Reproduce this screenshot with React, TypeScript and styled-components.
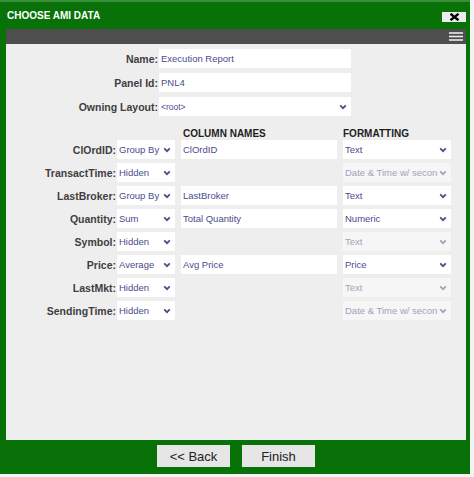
import { FC } from 'react';
import styled, { createGlobalStyle } from 'styled-components';

const COLOR_GREEN = '#087208';
const COLOR_BAR = '#4e4e4e';
const COLOR_PANEL = '#eeeeee';
const COLOR_LABEL = '#3e3e3e';
const COLOR_VALUE = '#4b4b8c';
const COLOR_DISABLED = '#a2a2bc';

const GlobalStyle = createGlobalStyle`
  html, body {
    margin: 0;
    padding: 0;
    background: #f2f4f2;
    font-family: "Liberation Sans", Arial, sans-serif;
  }
`;

const StyledWindow = styled.div`
  width: 470px;
  height: 474px;
  box-sizing: border-box;
  background: ${COLOR_GREEN};
  border-top: 2px solid #3a8f3a;
  padding: 0 4px 0 6px;
  display: flex;
  flex-direction: column;
`;

const StyledTitleBar = styled.div`
  height: 27px;
  display: flex;
  align-items: center;
  justify-content: space-between;
  padding-left: 1px;
`;

const StyledTitle = styled.span`
  color: #ffffff;
  font-size: 10px;
  font-weight: bold;
`;

const StyledCloseButton = styled.div`
  width: 24px;
  height: 10px;
  margin-top: 3px;
  background: #ececec;
  display: flex;
  align-items: center;
  justify-content: center;
`;

const StyledToolbar = styled.div`
  height: 15px;
  background: ${COLOR_BAR};
  display: flex;
  align-items: center;
  justify-content: flex-end;
  padding-right: 3px;
`;

const StyledPanel = styled.div`
  height: 396px;
  background: ${COLOR_PANEL};
  box-sizing: border-box;
  padding-top: 5px;
  display: flex;
  flex-direction: column;
`;

const StyledTopForm = styled.div`
  display: flex;
  flex-direction: column;
  gap: 5px;
`;

const StyledTopRow = styled.div`
  display: flex;
  align-items: center;
`;

const StyledTopLabel = styled.span`
  width: 152px;
  text-align: right;
  padding-right: 1px;
  color: ${COLOR_LABEL};
  font-size: 10.5px;
  font-weight: bold;
`;

const StyledInput = styled.div<{ width: number }>`
  width: ${({ width }) => width}px;
  height: 19px;
  box-sizing: border-box;
  background: #ffffff;
  padding-left: 2px;
  display: flex;
  align-items: center;
  color: ${COLOR_VALUE};
  font-size: 9.5px;
  white-space: nowrap;
  overflow: hidden;
`;

const StyledSelect = styled.div<{ width: number; disabled?: boolean }>`
  width: ${({ width }) => width}px;
  height: 19px;
  box-sizing: border-box;
  background: ${({ disabled }) => (disabled ? '#f6f6f6' : '#ffffff')};
  padding: 0 4px 0 2px;
  display: flex;
  align-items: center;
  gap: 1px;
  color: ${({ disabled }) => (disabled ? COLOR_DISABLED : COLOR_VALUE)};
`;

const StyledSelectText = styled.span<{ small?: boolean }>`
  flex: 1;
  min-width: 0;
  overflow: hidden;
  white-space: nowrap;
  font-size: ${({ small }) => (small ? '8.5px' : '9.5px')};
`;

const StyledFields = styled.div`
  margin-top: 11px;
  display: flex;
  flex-direction: column;
  gap: 4px;
`;

const StyledHeaderRow = styled.div`
  display: flex;
  height: 12px;
  align-items: center;
  margin-bottom: -3px;
`;

const StyledHeader = styled.span<{ left: number; width: number }>`
  margin-left: ${({ left }) => left}px;
  width: ${({ width }) => width}px;
  color: #1e1e1e;
  font-size: 10px;
  font-weight: bold;
`;

const StyledFieldRow = styled.div`
  display: flex;
  align-items: center;
`;

const StyledFieldLabel = styled.span`
  width: 110px;
  margin-right: 1px;
  text-align: right;
  color: ${COLOR_LABEL};
  font-size: 10.5px;
  font-weight: bold;
`;

const StyledCell = styled.div<{ width: number }>`
  margin-left: 6px;
  width: ${({ width }) => width}px;
  height: 19px;
`;

const StyledFooter = styled.div`
  flex: 1;
  display: flex;
  justify-content: center;
  align-items: flex-start;
  padding-top: 5px;
  gap: 12px;
`;

const StyledButton = styled.button`
  width: 73px;
  height: 22px;
  border: none;
  background: #e6e6e6;
  color: #222222;
  font-family: "Liberation Sans", Arial, sans-serif;
  font-size: 13px;
  padding: 0;
`;

const Chevron: FC<{ color: string }> = ({ color }) => (
  <svg width='8' height='6' viewBox='0 0 8 6'>
    <path d='M1.2 1.3 L4 4.2 L6.8 1.3' fill='none' stroke={color} strokeWidth='1.7' />
  </svg>
);

const Select: FC<{ value: string; width: number; disabled?: boolean; small?: boolean }> = ({
  value,
  width,
  disabled,
  small,
}) => (
  <StyledSelect width={width} disabled={disabled}>
    <StyledSelectText small={small}>{value}</StyledSelectText>
    <Chevron color={disabled ? COLOR_DISABLED : COLOR_VALUE} />
  </StyledSelect>
);

type Field = {
  label: string;
  agg: string;
  name?: string;
  format: string;
  formatOn: boolean;
};

const FIELDS: Field[] = [
  { label: 'ClOrdID', agg: 'Group By', name: 'ClOrdID', format: 'Text', formatOn: true },
  { label: 'TransactTime', agg: 'Hidden', format: 'Date & Time w/ seconds', formatOn: false },
  { label: 'LastBroker', agg: 'Group By', name: 'LastBroker', format: 'Text', formatOn: true },
  { label: 'Quantity', agg: 'Sum', name: 'Total Quantity', format: 'Numeric', formatOn: true },
  { label: 'Symbol', agg: 'Hidden', format: 'Text', formatOn: false },
  { label: 'Price', agg: 'Average', name: 'Avg Price', format: 'Price', formatOn: true },
  { label: 'LastMkt', agg: 'Hidden', format: 'Text', formatOn: false },
  { label: 'SendingTime', agg: 'Hidden', format: 'Date & Time w/ seconds', formatOn: false },
];

const App: FC = () => {
  return (
    <>
      <GlobalStyle />
      <StyledWindow>
        <StyledTitleBar>
          <StyledTitle>CHOOSE AMI DATA</StyledTitle>
          <StyledCloseButton>
            <svg width='11' height='8' viewBox='0 0 11 8'>
              <path d='M1.5 0.8 L9.5 7.2 M9.5 0.8 L1.5 7.2' stroke='#000' strokeWidth='2.4' />
            </svg>
          </StyledCloseButton>
        </StyledTitleBar>
        <StyledToolbar>
          <svg width='14' height='9' viewBox='0 0 14 9'>
            <path d='M0 1 H14 M0 4.5 H14 M0 8 H14' stroke='#f2f2f2' strokeWidth='1.6' />
          </svg>
        </StyledToolbar>
        <StyledPanel>
          <StyledTopForm>
            <StyledTopRow>
              <StyledTopLabel>Name:</StyledTopLabel>
              <StyledInput width={192}>Execution Report</StyledInput>
            </StyledTopRow>
            <StyledTopRow>
              <StyledTopLabel>Panel Id:</StyledTopLabel>
              <StyledInput width={192}>PNL4</StyledInput>
            </StyledTopRow>
            <StyledTopRow>
              <StyledTopLabel>Owning Layout:</StyledTopLabel>
              <Select value='<root>' width={192} small />
            </StyledTopRow>
          </StyledTopForm>

          <StyledFields>
            <StyledHeaderRow>
              <StyledHeader left={177} width={160}>
                COLUMN NAMES
              </StyledHeader>
              <StyledHeader left={0} width={108}>
                FORMATTING
              </StyledHeader>
            </StyledHeaderRow>
            {FIELDS.map((field) => (
              <StyledFieldRow key={field.label}>
                <StyledFieldLabel>{field.label}:</StyledFieldLabel>
                <Select value={field.agg} width={58} />
                <StyledCell width={156}>
                  {field.name && <StyledInput width={156}>{field.name}</StyledInput>}
                </StyledCell>
                <StyledCell width={108}>
                  <Select value={field.format} width={108} disabled={!field.formatOn} />
                </StyledCell>
              </StyledFieldRow>
            ))}
          </StyledFields>
        </StyledPanel>
        <StyledFooter>
          <StyledButton>&lt;&lt; Back</StyledButton>
          <StyledButton>Finish</StyledButton>
        </StyledFooter>
      </StyledWindow>
    </>
  );
};

export default App;
